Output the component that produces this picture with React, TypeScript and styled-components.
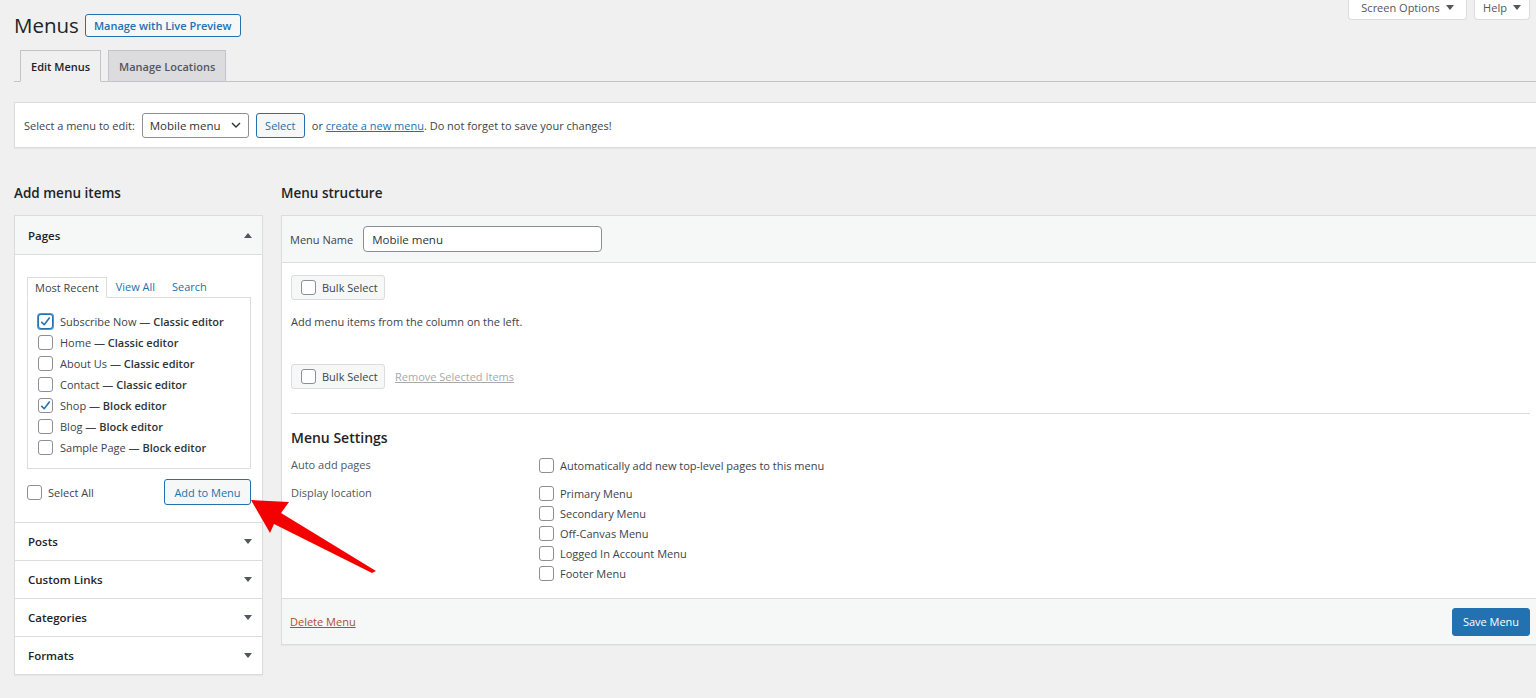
import React from 'react';
import styled, { createGlobalStyle, css } from 'styled-components';

const GlobalStyle = createGlobalStyle`
  html, body {
    margin: 0;
    padding: 0;
    background: #f0f0f1;
    overflow: hidden;
  }
  body {
    font-family: "Open Sans", "Noto Sans", Arial, sans-serif;
    font-size: 11px;
    color: #3c434a;
  }
  * {
    box-sizing: border-box;
  }
`;

const Wrap = styled.div`
  position: relative;
  padding-left: 14px;
  margin-right: -4px;
  height: 698px;
`;

const TopRow = styled.div`
  display: flex;
  justify-content: space-between;
  align-items: flex-start;
`;

const TitleRow = styled.div`
  display: flex;
  align-items: center;
  gap: 6px;
  margin-top: 14px;
`;

const Title = styled.h1`
  margin: 0;
  font-size: 20.5px;
  font-weight: 400;
  line-height: 23px;
  color: #1d2327;
`;

const ScreenMeta = styled.div`
  display: flex;
  gap: 7px;
  margin-right: 10px;
`;

const MetaTab = styled.div<{ $w: number }>`
  width: ${(p) => p.$w}px;
  height: 20px;
  padding-bottom: 5px;
  background: #fff;
  border: 1px solid #dcdcde;
  border-top: none;
  border-radius: 0 0 4px 4px;
  display: flex;
  align-items: center;
  justify-content: center;
  gap: 6px;
  color: #50575e;
  font-size: 11px;
`;

const Button = styled.button<{ $variant?: 'outline' | 'primary'; $w?: number; $h?: number }>`
  font-family: inherit;
  font-size: 11px;
  height: ${(p) => p.$h ?? 25}px;
  ${(p) => (p.$w ? `width: ${p.$w}px;` : '')}
  padding: 0 8px;
  border-radius: 3px;
  cursor: pointer;
  white-space: nowrap;
  ${(p) =>
    p.$variant === 'primary'
      ? css`
          background: #2271b1;
          border: 1px solid #2271b1;
          color: #fff;
        `
      : css`
          background: #f6f7f7;
          border: 1px solid #2271b1;
          color: #2271b1;
        `}
`;

const LiveButton = styled(Button)`
  font-weight: 600;
`;

const NavTabs = styled.div`
  display: flex;
  gap: 7px;
  margin-top: 13px;
  padding-left: 6px;
  border-bottom: 1px solid #c3c4c7;
`;

const NavTab = styled.div<{ $active?: boolean }>`
  height: 32px;
  margin-bottom: -1px;
  padding: 0 10px;
  display: flex;
  align-items: center;
  font-weight: 600;
  font-size: 11px;
  border: 1px solid #c3c4c7;
  background: ${(p) => (p.$active ? '#f0f0f1' : '#dcdcde')};
  color: ${(p) => (p.$active ? '#1d2327' : '#50575e')};
  border-bottom-color: ${(p) => (p.$active ? '#f0f0f1' : '#c3c4c7')};
`;

const ManageBox = styled.div`
  margin-top: 20px;
  height: 46px;
  background: #fff;
  border: 1px solid #dcdcde;
  box-shadow: 0 1px 1px rgba(0, 0, 0, 0.04);
  display: flex;
  align-items: center;
  gap: 7px;
  padding: 0 9px;
`;

const SelectBox = styled.div`
  width: 107px;
  height: 25px;
  border: 1px solid #8c8f94;
  border-radius: 3px;
  display: flex;
  align-items: center;
  justify-content: space-between;
  padding: 0 7px;
  font-size: 11.5px;
  color: #2c3338;
  background: #fff;
`;

const Link = styled.a<{ $tone?: 'blue' | 'gray' | 'red' }>`
  color: ${(p) => (p.$tone === 'gray' ? '#a7aaad' : p.$tone === 'red' ? '#a9502f' : '#2271b1')};
  text-decoration: underline;
  cursor: pointer;
`;

const Columns = styled.div`
  display: flex;
  gap: 18px;
  margin-top: 35px;
  align-items: flex-start;
`;

const LeftCol = styled.div`
  width: 249px;
  flex: none;
`;

const RightCol = styled.div`
  flex: 1;
  min-width: 0;
`;

const ColHeading = styled.h2`
  margin: 0 0 12px;
  font-size: 13.5px;
  line-height: 20px;
  font-weight: 600;
  color: #1d2327;
`;

const Accordion = styled.div`
  background: #fff;
  border: 1px solid #dcdcde;
  box-shadow: 0 1px 1px rgba(0, 0, 0, 0.04);
`;

const AccHeader = styled.div<{ $open?: boolean }>`
  height: ${(p) => (p.$open ? 39 : 38)}px;
  padding: 0 10px 0 13px;
  display: flex;
  align-items: center;
  justify-content: space-between;
  font-weight: 600;
  font-size: 11.5px;
  color: #1d2327;
  ${(p) =>
    p.$open
      ? css`
          background: #f6f7f7;
          border-bottom: 1px solid #dcdcde;
        `
      : css`
          border-top: 1px solid #dcdcde;
        `}
`;

const AccBody = styled.div`
  padding: 22px 11px 17px 12px;
`;

const InnerTabs = styled.div`
  display: flex;
  align-items: flex-end;
  height: 20px;
`;

const InnerTab = styled.div<{ $active?: boolean }>`
  height: 21px;
  display: flex;
  align-items: center;
  padding: 0 7px;
  margin-right: ${(p) => (p.$active ? 2 : 3)}px;
  color: ${(p) => (p.$active ? '#3c434a' : '#2271b1')};
  ${(p) =>
    p.$active &&
    css`
      background: #fff;
      border: 1px solid #dcdcde;
      border-bottom-color: #fff;
      margin-bottom: -1px;
      position: relative;
      z-index: 1;
    `}
`;

const ItemPanel = styled.div`
  border: 1px solid #dcdcde;
  height: 172px;
  padding: 13px 10px 10px;
`;

const CheckRow = styled.label<{ $h?: number; $gap?: number }>`
  display: flex;
  align-items: center;
  gap: ${(p) => p.$gap ?? 7}px;
  height: ${(p) => p.$h ?? 21}px;
  color: #3c434a;
  white-space: nowrap;
  b {
    font-weight: 600;
    color: #2c3338;
  }
`;

const Box = styled.span<{ $focus?: boolean }>`
  width: 15px;
  height: 15px;
  flex: none;
  border: 1px solid ${(p) => (p.$focus ? '#2271b1' : '#8c8f94')};
  border-radius: 3px;
  background: #fff;
  display: inline-flex;
  align-items: center;
  justify-content: center;
  ${(p) => p.$focus && 'box-shadow: 0 0 0 1px #4f94d4;'}
`;

const AddRow = styled.div`
  display: flex;
  justify-content: space-between;
  align-items: center;
  margin-top: 10px;
`;

const Panel = styled.div`
  background: #fff;
  border: 1px solid #dcdcde;
  box-shadow: 0 1px 1px rgba(0, 0, 0, 0.04);
`;

const PanelHeader = styled.div`
  height: 47px;
  background: #f6f7f7;
  border-bottom: 1px solid #dcdcde;
  display: flex;
  align-items: center;
  gap: 10px;
  padding-left: 8px;
  color: #3c434a;
`;

const NameInput = styled.div`
  width: 239px;
  height: 26px;
  border: 1px solid #8c8f94;
  border-radius: 4px;
  background: #fff;
  padding: 0 8px;
  display: flex;
  align-items: center;
  font-size: 11.5px;
  color: #2c3338;
`;

const PanelBody = styled.div`
  padding: 12px 9px 15px 9px;
`;

const BulkRow = styled.div<{ $mt?: number }>`
  display: flex;
  align-items: center;
  gap: 10px;
  margin-top: ${(p) => p.$mt ?? 0}px;
`;

const BulkButton = styled.div`
  width: 94px;
  height: 25px;
  background: #f6f7f7;
  border: 1px solid #dcdcde;
  border-radius: 3px;
  display: flex;
  align-items: center;
  gap: 6px;
  padding-left: 9px;
  font-size: 11px;
  color: #3c434a;
`;

const Hint = styled.p`
  margin: 13px 0 0;
  line-height: 18px;
`;

const Divider = styled.hr`
  margin: 24px 0 0;
  border: none;
  border-top: 1px solid #dcdcde;
`;

const SettingsTitle = styled.h3`
  margin: 14px 0 0;
  font-size: 14px;
  line-height: 20px;
  font-weight: 600;
  color: #1d2327;
`;

const SettingsGrid = styled.div`
  display: grid;
  grid-template-columns: 248px 1fr;
  row-gap: 8px;
  margin-top: 7px;
`;

const SettingLabel = styled.div`
  line-height: 20px;
  color: #50575e;
`;

const PanelFooter = styled.div`
  height: 46px;
  background: #f6f7f7;
  border-top: 1px solid #dcdcde;
  display: flex;
  align-items: center;
  justify-content: space-between;
  padding: 0 9px 0 8px;
`;

const ArrowOverlay = styled.svg`
  position: absolute;
  left: 245px;
  top: 495px;
  pointer-events: none;
`;

const Caret = ({ up }: { up?: boolean }) => (
  <svg width="8" height="5" viewBox="0 0 8 5">
    <polygon points={up ? '0,5 8,5 4,0' : '0,0 8,0 4,5'} fill="#50575e" />
  </svg>
);

const Check = ({ checked, focus }: { checked?: boolean; focus?: boolean }) => (
  <Box $focus={focus}>
    {checked && (
      <svg width="13" height="13" viewBox="0 0 20 20">
        <path d="M3.5 10.5 L8 15 L16.5 4" fill="none" stroke="#2271b1" strokeWidth="2.4" strokeLinejoin="round" />
      </svg>
    )}
  </Box>
);

const pages = [
  { name: 'Subscribe Now', editor: 'Classic editor', checked: true, focus: true },
  { name: 'Home', editor: 'Classic editor' },
  { name: 'About Us', editor: 'Classic editor' },
  { name: 'Contact', editor: 'Classic editor' },
  { name: 'Shop', editor: 'Block editor', checked: true },
  { name: 'Blog', editor: 'Block editor' },
  { name: 'Sample Page', editor: 'Block editor' },
];

const locations = ['Primary Menu', 'Secondary Menu', 'Off-Canvas Menu', 'Logged In Account Menu', 'Footer Menu'];

const closedSections = ['Posts', 'Custom Links', 'Categories', 'Formats'];

export default function App() {
  return (
    <>
      <GlobalStyle />
      <Wrap>
        <TopRow>
          <TitleRow>
            <Title>Menus</Title>
            <LiveButton $h={23}>Manage with Live Preview</LiveButton>
          </TitleRow>
          <ScreenMeta>
            <MetaTab $w={119}>
              Screen Options <Caret />
            </MetaTab>
            <MetaTab $w={56}>
              Help <Caret />
            </MetaTab>
          </ScreenMeta>
        </TopRow>

        <NavTabs>
          <NavTab $active>Edit Menus</NavTab>
          <NavTab>Manage Locations</NavTab>
        </NavTabs>

        <ManageBox>
          <span>Select a menu to edit:</span>
          <SelectBox>
            Mobile menu
            <svg width="10" height="6" viewBox="0 0 10 6">
              <path d="M1 1 L5 5 L9 1" fill="none" stroke="#2c3338" strokeWidth="1.4" />
            </svg>
          </SelectBox>
          <Button $w={49}>Select</Button>
          <span>
            or <Link>create a new menu</Link>. Do not forget to save your changes!
          </span>
        </ManageBox>

        <Columns>
          <LeftCol>
            <ColHeading>Add menu items</ColHeading>
            <Accordion>
              <AccHeader $open>
                Pages <Caret up />
              </AccHeader>
              <AccBody>
                <InnerTabs>
                  <InnerTab $active>Most Recent</InnerTab>
                  <InnerTab>View All</InnerTab>
                  <InnerTab>Search</InnerTab>
                </InnerTabs>
                <ItemPanel>
                  {pages.map((p) => (
                    <CheckRow key={p.name}>
                      <Check checked={p.checked} focus={p.focus} />
                      <span>
                        {p.name} — <b>{p.editor}</b>
                      </span>
                    </CheckRow>
                  ))}
                </ItemPanel>
                <AddRow>
                  <CheckRow $h={26} $gap={6}>
                    <Check />
                    Select All
                  </CheckRow>
                  <Button $w={87} $h={26}>
                    Add to Menu
                  </Button>
                </AddRow>
              </AccBody>
              {closedSections.map((s) => (
                <AccHeader key={s}>
                  {s} <Caret />
                </AccHeader>
              ))}
            </Accordion>
          </LeftCol>

          <RightCol>
            <ColHeading>Menu structure</ColHeading>
            <Panel>
              <PanelHeader>
                Menu Name
                <NameInput>Mobile menu</NameInput>
              </PanelHeader>
              <PanelBody>
                <BulkRow>
                  <BulkButton>
                    <Check />
                    Bulk Select
                  </BulkButton>
                </BulkRow>
                <Hint>Add menu items from the column on the left.</Hint>
                <BulkRow $mt={33}>
                  <BulkButton>
                    <Check />
                    Bulk Select
                  </BulkButton>
                  <Link $tone="gray">Remove Selected Items</Link>
                </BulkRow>
                <Divider />
                <SettingsTitle>Menu Settings</SettingsTitle>
                <SettingsGrid>
                  <SettingLabel>Auto add pages</SettingLabel>
                  <CheckRow $h={20} $gap={6}>
                    <Check />
                    Automatically add new top-level pages to this menu
                  </CheckRow>
                  <SettingLabel>Display location</SettingLabel>
                  <div>
                    {locations.map((l) => (
                      <CheckRow key={l} $h={20} $gap={6}>
                        <Check />
                        {l}
                      </CheckRow>
                    ))}
                  </div>
                </SettingsGrid>
              </PanelBody>
              <PanelFooter>
                <Link $tone="red">Delete Menu</Link>
                <Button $variant="primary" $w={78} $h={28}>
                  Save Menu
                </Button>
              </PanelFooter>
            </Panel>
          </RightCol>
        </Columns>

        <ArrowOverlay width="140" height="85" viewBox="0 0 140 85">
          <polygon points="6,5 44,7 36,18 131,76 127,78 29,29 25,38" fill="#f50000" />
        </ArrowOverlay>
      </Wrap>
    </>
  );
}
